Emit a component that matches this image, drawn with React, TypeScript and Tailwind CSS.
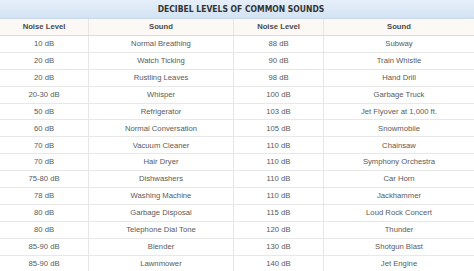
const rows: [string, string, string, string][] = [
  ["10 dB", "Normal Breathing", "88 dB", "Subway"],
  ["20 dB", "Watch Ticking", "90 dB", "Train Whistle"],
  ["20 dB", "Rustling Leaves", "98 dB", "Hand Drill"],
  ["20-30 dB", "Whisper", "100 dB", "Garbage Truck"],
  ["50 dB", "Refrigerator", "103 dB", "Jet Flyover at 1,000 ft."],
  ["60 dB", "Normal Conversation", "105 dB", "Snowmobile"],
  ["70 dB", "Vacuum Cleaner", "110 dB", "Chainsaw"],
  ["70 dB", "Hair Dryer", "110 dB", "Symphony Orchestra"],
  ["75-80 dB", "Dishwashers", "110 dB", "Car Horn"],
  ["78 dB", "Washing Machine", "110 dB", "Jackhammer"],
  ["80 dB", "Garbage Disposal", "115 dB", "Loud Rock Concert"],
  ["80 dB", "Telephone Dial Tone", "120 dB", "Thunder"],
  ["85-90 dB", "Blender", "130 dB", "Shotgun Blast"],
  ["85-90 dB", "Lawnmower", "140 dB", "Jet Engine"],
];

const cols = "grid grid-cols-[89px_145px_90px_150px]";
const cell = "flex items-center justify-center border-r border-[#e6e6e6] last:border-r-0";

export default function App() {
  return (
    <div className="w-[474px] h-[271px] overflow-hidden bg-white font-['Liberation_Sans',Arial,sans-serif]">
      <div className="h-[19px] flex items-center justify-center bg-gradient-to-b from-[#e6eff9] to-[#d2e3f3] border-b border-[#c9d9ea]">
        <span className="font-['DejaVu_Sans_Condensed',sans-serif] font-bold text-[8.5px] text-[#333] ml-[8px]">
          DECIBEL LEVELS OF COMMON SOUNDS
        </span>
      </div>
      <div className={`${cols} h-[17px] bg-[#fbf8f5] border-b border-[#dcdcdc] text-[7.7px] font-bold text-[#4a4a4a]`}>
        <div className={cell}>Noise Level</div>
        <div className={cell}>Sound</div>
        <div className={cell}>Noise Level</div>
        <div className={cell}>Sound</div>
      </div>
      {rows.map((r, i) => (
        <div key={i} className={`${cols} h-[16.9px] border-b border-[#e8e8e8] text-[7.7px] text-[#5a5a5a]`}>
          {r.map((t, j) => (
            <div key={j} className={cell}>{t}</div>
          ))}
        </div>
      ))}
    </div>
  );
}
